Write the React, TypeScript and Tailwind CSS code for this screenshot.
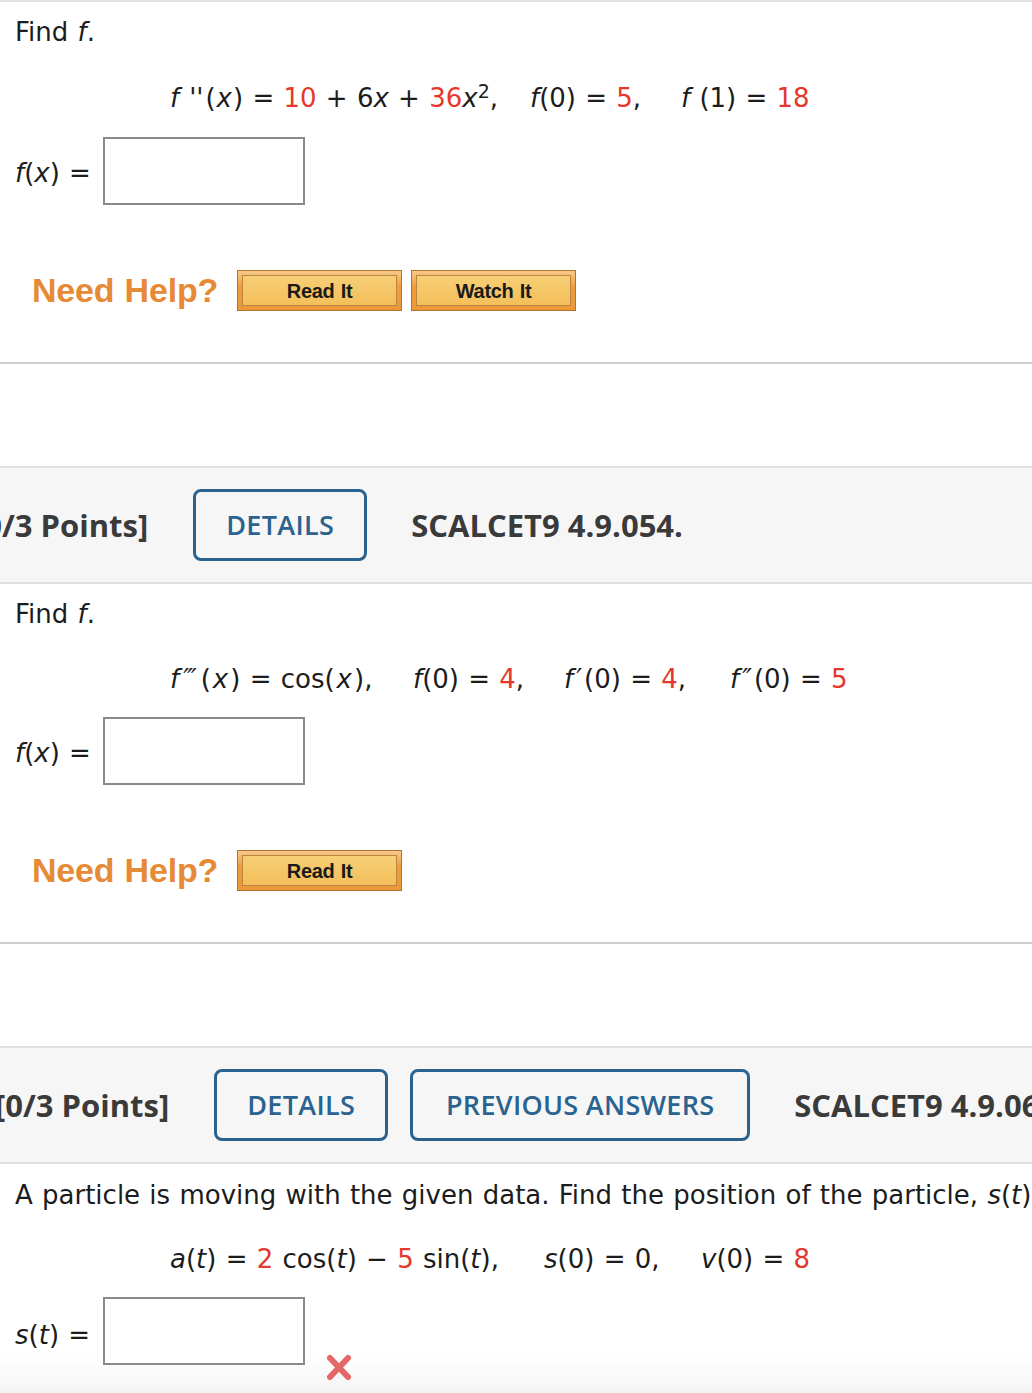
import React from "react";

const red = "text-[#e5372b]";

function Box() {
  return <div className="w-[202px] h-[68px] border-2 border-[#8a8a8a] bg-white" />;
}

function HelpButton({ label }: { label: string }) {
  return (
    <div className="w-[165px] h-[41px] border border-[#b0742f] bg-[linear-gradient(to_bottom,#f8c98a,#ef9d3c_40%,#ec9838)] p-[4px] flex">
      <div className="flex-1 border border-[#b98543] bg-[linear-gradient(to_bottom,#f7cf75,#f3bf5b)] flex items-center justify-center">
        <span className="font-['Liberation_Sans',Arial,sans-serif] font-bold text-[20px] text-[#1a1a1a] tracking-[-0.3px]">{label}</span>
      </div>
    </div>
  );
}

function NeedHelp({ watch }: { watch?: boolean }) {
  return (
    <div className="flex items-center pl-[32px]">
      <span className="font-['Liberation_Sans',Arial,sans-serif] font-bold text-[34px] leading-[41px] text-[#e68a35] mr-[19px] tracking-[-0.2px]">Need Help?</span>
      <HelpButton label="Read It" />
      {watch && (
        <div className="ml-[9px]">
          <HelpButton label="Watch It" />
        </div>
      )}
    </div>
  );
}

function OutlineBtn({ label, w }: { label: string; w: string }) {
  return (
    <div className={`${w} h-[72px] border-[3px] border-[#2a6290] rounded-[8px] flex items-center justify-center shrink-0`}>
      <span className="text-[27px] font-semibold text-[#2a6290] tracking-[0.3px]">{label}</span>
    </div>
  );
}

function Band({ prev, labelShift, code }: { prev?: boolean; labelShift: string; code: string }) {
  return (
    <div className="border-y-2 border-[#e0e0e0] bg-[#f6f6f6] h-[118px] flex items-center whitespace-nowrap overflow-hidden font-['Open_Sans',sans-serif] [word-spacing:0px]">
      <span className={`${labelShift} text-[31px] font-bold text-[#3a3a3a] shrink-0`}>[0/3 Points]</span>
      <div className="ml-[45px] flex shrink-0">
        <OutlineBtn label="DETAILS" w="w-[174px]" />
        {prev && (
          <div className="ml-[22px]">
            <OutlineBtn label="PREVIOUS ANSWERS" w="w-[340px]" />
          </div>
        )}
      </div>
      <span className="ml-[44px] text-[31px] font-bold text-[#3a3a3a] shrink-0">{code}</span>
    </div>
  );
}

export default function App() {
  return (
    <div className="w-[1032px] h-[1393px] overflow-hidden bg-[linear-gradient(to_bottom,#ffffff_1355px,#f4f4f4_1393px)] text-[#1c1c1c] font-['DejaVu_Sans',Verdana,sans-serif] text-[26px] [word-spacing:1px]">
      {/* Section 1 */}
      <div className="border-t-2 border-[#e2e2e2]">
        <div className="pl-[15px] mt-[15px] leading-[30px]">
          Find <i>f</i>.
        </div>
        <div className="pl-[170px] mt-[36px] leading-[30px] whitespace-nowrap">
          <span className="inline-block w-[360px]">
            <i>f</i>
            <i className="ml-[10px] mr-[2px]">''</i>(<i className="mx-[1px]">x</i>) = <span className={red}>10</span> + 6<i>x</i> + <span className={red}>36</span>
            <i>x</i>
            <sup className="text-[19px]">2</sup>,
          </span>
          <span className="inline-block w-[151px]">
            <i>f</i>(0) = <span className={red}>5</span>,
          </span>
          <span className="inline-block">
            <i>f</i> (1) = <span className={red}>18</span>
          </span>
        </div>
        <div className="flex items-center pl-[15px] mt-[24px]">
          <span className="w-[88px] leading-[30px] pt-[3px]">
            <i>f</i>(<i>x</i>) =
          </span>
          <Box />
        </div>
        <div className="mt-[65px]">
          <NeedHelp watch />
        </div>
        <div className="mt-[51px] h-[2px] bg-[#cdcdcd]" />
      </div>

      <div className="h-[102px]" />

      {/* Section 2 */}
      <Band labelShift="-ml-[26px]" code="SCALCET9 4.9.054." />
      <div>
        <div className="pl-[15px] mt-[15px] leading-[30px]">
          Find <i>f</i>.
        </div>
        <div className="pl-[170px] mt-[35px] leading-[30px] whitespace-nowrap">
          <span className="inline-block w-[243px]">
            <i>f</i>
            <i className="ml-[4px] mr-[3px] tracking-[1px]">‴</i>(<i className="mx-[2px]">x</i>) = cos(<i className="mx-[2px]">x</i>),
          </span>
          <span className="inline-block w-[151px]">
            <i>f</i>(0) = <span className={red}>4</span>,
          </span>
          <span className="inline-block w-[166px]">
            <i>f</i>
            <i className="ml-[3px] mr-[2px]">′</i>(0) = <span className={red}>4</span>,
          </span>
          <span className="inline-block">
            <i>f</i>
            <i className="ml-[3px] mr-[2px]">″</i>(0) = <span className={red}>5</span>
          </span>
        </div>
        <div className="flex items-center pl-[15px] mt-[23px]">
          <span className="w-[88px] leading-[30px] pt-[3px]">
            <i>f</i>(<i>x</i>) =
          </span>
          <Box />
        </div>
        <div className="mt-[65px]">
          <NeedHelp />
        </div>
        <div className="mt-[51px] h-[2px] bg-[#cdcdcd]" />
      </div>

      <div className="h-[102px]" />

      {/* Section 3 */}
      <Band prev labelShift="-ml-[5px]" code="SCALCET9 4.9.060." />
      <div>
        <div className="pl-[15px] mt-[16px] leading-[30px] whitespace-nowrap">
          A particle is moving with the given data. Find the position of the particle, <i>s</i>(<i>t</i>).
        </div>
        <div className="pl-[170px] mt-[34px] leading-[30px] whitespace-nowrap">
          <span className="inline-block w-[374px]">
            <i>a</i>(<i>t</i>) = <span className={red}>2</span> cos(<i>t</i>) − <span className={red}>5</span> sin(<i>t</i>),
          </span>
          <span className="inline-block w-[157px]">
            <i>s</i>(0) = 0,
          </span>
          <span className="inline-block">
            <i>v</i>(0) = <span className={red}>8</span>
          </span>
        </div>
        <div className="flex items-center pl-[15px] mt-[23px]">
          <span className="w-[88px] leading-[30px] pt-[8px]">
            <i>s</i>(<i>t</i>) =
          </span>
          <Box />
          <svg className="self-end -mb-[16px] ml-[20px]" width="28" height="27" viewBox="0 0 28 27">
            <path d="M5 4 L23 23 M23 4 L5 23" stroke="#e35757" strokeWidth="6" strokeLinecap="round" opacity="0.9" />
          </svg>
        </div>
      </div>
    </div>
  );
}
